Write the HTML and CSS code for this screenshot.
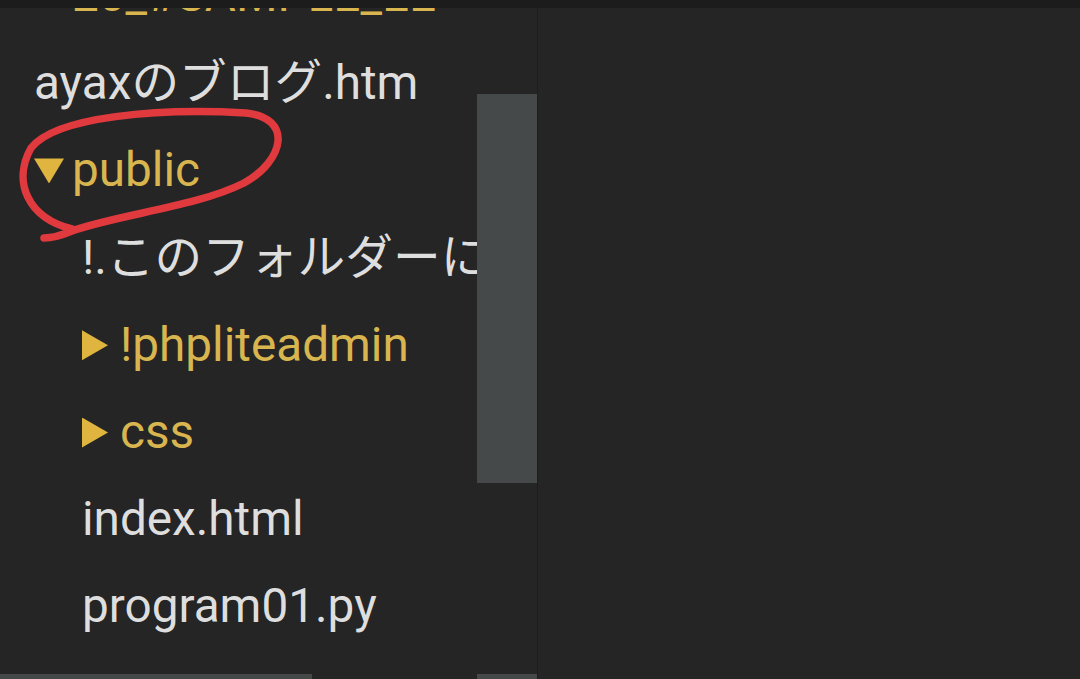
FILE: index.html
```html
<!DOCTYPE html>
<html lang="ja">
<head>
  <meta charset="utf-8">
  <title>Files</title>
  <link rel="stylesheet" href="styles.css">
</head>
<body>
<div class="screen">
  <div class="topbar"></div>
  <div class="panes">
    <div class="side">
      <div class="tree">
        <ul class="files">
          <li class="dir top"><span class="tri open"></span>20_#SAMPLE_EE</li>
          <li class="file">ayaxのブログ.htm</li>
          <li class="dir"><span class="tri open"></span>public</li>
          <li class="file sub">!.このフォルダーについて.txt</li>
          <li class="dir sub"><span class="tri shut"></span>!phpliteadmin</li>
          <li class="dir sub"><span class="tri shut"></span>css</li>
          <li class="file sub">index.html</li>
          <li class="file sub">program01.py</li>
        </ul>
      </div>
      <div class="vscroll"><div class="thumb"></div></div>
      <div class="hscroll"><div class="thumb"></div></div>
      <div class="corner"></div>
    </div>
    <div class="editor"></div>
  </div>
  <svg class="mark" width="300" height="260" viewBox="0 0 300 260">
    <path d="M72 229 C 28 218, 12 182, 31 148 C 56 116, 160 108, 246 113 C 293 118, 285 160, 244 183 C 196 207, 120 214, 72 231 C 60 236, 52 238, 44 238" />
  </svg>
</div>
</body>
</html>
```

FILE: styles.css
```css
html, body { margin: 0; padding: 0; }
body { background-color: #252525; font-family: Roboto, "Noto Sans CJK JP", sans-serif; font-size: 47.7px; color: #dedede; }
.screen { position: relative; width: 1080px; height: 679px; overflow: hidden; display: flex; flex-direction: column; }
.topbar { height: 8px; background-color: #1c1c1c; flex: none; }
.panes { flex: 1; display: flex; min-height: 0; }
.side { width: 537px; display: grid; grid-template-columns: 477px 60px; grid-template-rows: 1fr 5px; border-right: 1px solid #1d1d1d; }
.tree { overflow: hidden; min-height: 0; }
ul.files { list-style-type: none; margin: -58px 0 0 0; padding: 0; white-space: nowrap; }
ul.files li { height: 87.2px; line-height: 87.2px; padding-left: 34px; display: flex; align-items: center; }
ul.files li.top { height: 90.2px; line-height: 90.2px; align-items: flex-start; }
ul.files li.sub { padding-left: 82px; }
ul.files li.dir { color: #d8b54e; }
.tri { display: inline-block; flex: none; background-color: #dfb43f; }
.tri.open { width: 30px; height: 25px; margin-right: 8px; clip-path: polygon(0 0, 100% 0, 50% 100%); }
.tri.shut { width: 26px; height: 30px; margin-right: 12px; clip-path: polygon(0 0, 100% 50%, 0 100%); }
.top .tri { margin-top: 33px; }
.vscroll { padding-top: 86px; }
.vscroll .thumb { height: 389px; background-color: #464949; }
.hscroll .thumb { width: 312px; height: 5px; background-color: #464949; }
.corner { background-color: #464949; }
.editor { flex: 1; background-color: #252525; }
.mark { position: absolute; left: 0; top: 0; }
.mark path { fill: none; stroke: #e0393e; stroke-width: 7.5; stroke-linecap: round; stroke-linejoin: round; }
```
